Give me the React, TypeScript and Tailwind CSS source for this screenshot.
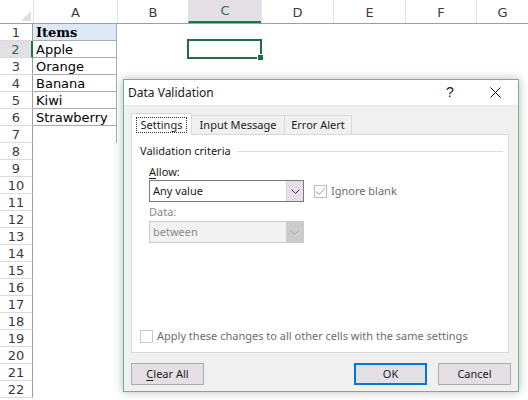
import React from "react";

const columns = [
  { key: "A", w: "w-[84px]" },
  { key: "B", w: "w-[71px]" },
  { key: "C", w: "w-[73px]" },
  { key: "D", w: "w-[72px]" },
  { key: "E", w: "w-[72px]" },
  { key: "F", w: "w-[71px]" },
  { key: "G", w: "flex-1" },
];

const items = ["Items", "Apple", "Orange", "Banana", "Kiwi", "Strawberry"];
const rows = Array.from({ length: 22 }, (_, i) => i + 1);

const Chevron: React.FC<{ color: string }> = ({ color }) => (
  <svg width="9" height="5" viewBox="0 0 9 5" fill="none">
    <polyline points="0.5,0.5 4.5,4.5 8.5,0.5" stroke={color} strokeWidth="1" />
  </svg>
);

const Check: React.FC = () => (
  <svg width="11" height="9" viewBox="0 0 11 9" fill="none">
    <polyline points="1,4.5 4,7.5 10,1" stroke="#b4b4b4" strokeWidth="1.1" />
  </svg>
);

const Sheet: React.FC = () => (
  <div className="flex flex-col font-['DejaVu_Sans',sans-serif] text-[13px] text-[#3c3c3c]">
    <div className="flex h-[24px] border-b border-[#9f9f9f]">
      <div className="relative w-[33px] shrink-0">
        <svg className="absolute right-[2px] bottom-[2px]" width="10" height="10" viewBox="0 0 10 10">
          <polygon points="10,0 10,10 0,10" fill="#dedede" />
        </svg>
      </div>
      {columns.map((c) => (
        <div
          key={c.key}
          className={`${c.w} ${
            c.key === "C"
              ? "bg-[#e4dfe4] border-b-2 border-[#217346] text-[#217346]"
              : ""
          } flex items-end justify-center pb-[1px] border-l border-l-[#e2e2e2] shrink-0`}
        >
          {c.key}
        </div>
      ))}
    </div>
    {rows.map((r) => (
      <div key={r} className="flex h-[17px]">
        <div
          className={`w-[33px] shrink-0 flex items-center justify-center border-b border-[#dadada] ${
            r === 2
              ? "bg-[#e4dfe4] border-r-2 border-r-[#217346] text-[#217346]"
              : "border-r border-r-[#9f9f9f]"
          } leading-none`}
        >
          {r}
        </div>
        <div
          className={`w-[84px] shrink-0 flex items-center pl-[3px] leading-none text-[#000] ${
            r <= 6 ? "border-b border-r border-[#ababab]" : r === 7 ? "border-r border-[#ababab]" : ""
          } ${r === 1 ? "bg-[#dde9f6] font-['DejaVu_Serif',serif] font-bold" : ""}`}
        >
          {items[r - 1] ?? ""}
        </div>
        <div className="w-[71px] shrink-0" />
        <div className="relative w-[73px] shrink-0">
          {r === 2 && (
            <div className="absolute -left-[1px] -top-[2px] h-[20px] w-[75px] border-2 border-[#1e6e42]">
              <div className="absolute -right-[3px] -bottom-[3px] h-[5px] w-[5px] bg-[#1e6e42] outline outline-1 outline-white" />
            </div>
          )}
        </div>
        <div className="flex-1" />
      </div>
    ))}
  </div>
);

const Button: React.FC<{ children: React.ReactNode; primary?: boolean }> = ({ children, primary }) => (
  <div
    className={`w-[73px] h-[22px] flex items-center justify-center bg-[#e3dfe3] ${
      primary ? "border-2 border-[#0078d7]" : "border border-[#adadad]"
    }`}
  >
    {children}
  </div>
);

const Dialog: React.FC = () => (
  <div className="absolute left-[123px] top-[79px] w-[396px] h-[313px] border border-[#62b98c] bg-[#f0f0f0] shadow-[0_0_9px_rgba(0,0,0,0.28)] flex flex-col font-['Noto_Sans',sans-serif] text-[11px] text-[#1a1a1a]">
    <div className="h-[26px] bg-white flex items-center border-b border-[#e8e8e8]">
      <span className="pl-[4px] flex-1 text-[12px]">Data Validation</span>
      <div className="w-[44px] flex justify-center text-[14px] font-['Liberation_Sans',sans-serif]">?</div>
      <div className="w-[46px] flex justify-center">
        <svg width="11" height="11" viewBox="0 0 11 11">
          <path d="M0.5 0.5 L10.5 10.5 M10.5 0.5 L0.5 10.5" stroke="#111" strokeWidth="1" />
        </svg>
      </div>
    </div>
    <div className="flex flex-col px-[7px] pt-[6px]">
      <div className="flex items-end h-[22px]">
        <div className="relative z-10 h-[22px] w-[61px] bg-white border border-b-0 border-[#d9d9d9] flex items-center justify-center -mb-px">
          <span className="border border-dotted border-[#333] px-[4px] leading-[14px]">Settings</span>
        </div>
        <div className="h-[19px] w-[93px] border border-l-0 border-b-0 border-[#d9d9d9] flex items-center justify-center">
          Input Message
        </div>
        <div className="h-[19px] w-[67px] border border-l-0 border-b-0 border-[#d9d9d9] flex items-center justify-center">
          Error Alert
        </div>
      </div>
      <div className="h-[219px] w-[378px] bg-white border border-[#d9d9d9] flex flex-col">
        <div className="mt-[8px] pl-[8px] pr-[5px] flex items-center h-[16px] gap-[6px]">
          <span>Validation criteria</span>
          <div className="flex-1 h-px bg-[#dcdcdc]" />
        </div>
        <div className="pl-[17px] flex flex-col">
          <div className="mt-[5px] h-[16px] leading-[16px]">
            <span className="underline underline-offset-2">A</span>llow:
          </div>
          <div className="flex items-center gap-[10px]">
            <div className="w-[155px] h-[22px] border border-[#7a7a7a] bg-white flex">
              <div className="flex-1 flex items-center pl-[3px]">Any value</div>
              <div className="w-[17px] bg-[#e8e0e8] border-l border-[#d8d0d8] flex items-center justify-center">
                <Chevron color="#333" />
              </div>
            </div>
            <div className="flex items-center gap-[4px] text-[#6d6d6d]">
              <div className="w-[13px] h-[13px] border border-[#bcbcbc] bg-white flex items-center justify-center">
                <Check />
              </div>
              <span>Ignore blank</span>
            </div>
          </div>
          <div className="mt-[2px] h-[16px] leading-[16px] text-[#8a8a8a]">Data:</div>
          <div className="mt-[1px] w-[155px] h-[22px] border border-[#cccccc] bg-[#f2f2f2] flex text-[#8a8a8a]">
            <div className="flex-1 flex items-center pl-[3px]">between</div>
            <div className="w-[17px] bg-[#cccccc] flex items-center justify-center">
              <Chevron color="#a8a8a8" />
            </div>
          </div>
        </div>
        <div className="mt-auto mb-[8px] pl-[8px] flex items-center h-[16px] gap-[4px] text-[#6d6d6d]">
          <div className="w-[13px] h-[13px] border border-[#c8c8c8] bg-white" />
          <span>Apply these changes to all other cells with the same settings</span>
        </div>
      </div>
      <div className="mt-[10px] flex items-center">
        <Button>
          <span className="underline underline-offset-2">C</span>lear All
        </Button>
        <div className="flex-1" />
        <Button primary>OK</Button>
        <div className="w-[11px]" />
        <Button>Cancel</Button>
      </div>
    </div>
  </div>
);

export default function App() {
  return (
    <div className="relative w-[528px] h-[400px] overflow-hidden bg-white">
      <Sheet />
      <Dialog />
    </div>
  );
}
